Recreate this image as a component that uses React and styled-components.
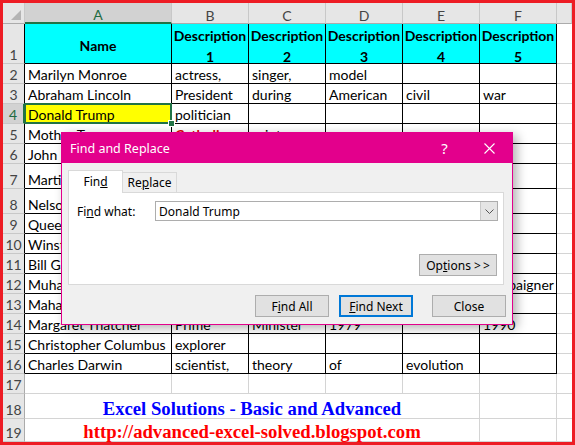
import React from 'react'
import styled, { createGlobalStyle } from 'styled-components'

const GlobalStyle = createGlobalStyle`
  body {
    margin: 0;
    background: #fff;
  }
`

const COLS = ['A', 'B', 'C', 'D', 'E', 'F']

// rows 2..16, [value, color] where a cell needs its own colour
const DATA = [
  ['Marilyn Monroe', 'actress,', 'singer,', 'model', '', ''],
  ['Abraham Lincoln', 'President', 'during', 'American', 'civil', 'war'],
  ['Donald Trump', 'politician', '', '', '', ''],
  ['Mother Teresa', ['Catholic', '#e00000'], 'saint', '', '', ''],
  ['John Lennon', 'singer,', 'songwriter', '', '', ''],
  ['Martin Luther King', 'activist', '', '', '', ''],
  ['Nelson Mandela', 'President', 'of', 'South', 'Africa', ''],
  ['Queen Elizabeth', 'monarch', '', '', '', ''],
  ['Winston Churchill', 'Prime', 'Minister', '', '', ''],
  ['Bill Gates', 'business', 'magnate', '', '', ''],
  ['Muhammad Ali', 'boxer,', 'activist,', '', '', 'campaigner'],
  ['Mahatma Gandhi', 'leader', '', '', '', ''],
  ['Margaret Thatcher', 'Prime', 'Minister', '1979', '', '1990'],
  ['Christopher Columbus', 'explorer', '', '', '', ''],
  ['Charles Darwin', 'scientist,', 'theory', 'of', 'evolution', '']
]

const Frame = styled.div`
  position: relative;
  width: 575px;
  height: 445px;
  box-sizing: border-box;
  border: 3px solid #ed1c24;
  overflow: hidden;
  font-family: Lato, 'Liberation Sans', sans-serif;
`

const Sheet = styled.div`
  display: grid;
  grid-template-columns: 22px 147px repeat(5, 77px) 1fr;
  grid-template-rows: 21px 40px repeat(5, 20px) 25px 25px repeat(9, 20px) 25px 23px;
  height: 100%;
`

const Corner = styled.div`
  display: flex;
  align-items: flex-end;
  justify-content: flex-end;
  padding: 0 3px 3px 0;
  background: #e6e6e6;
  border-right: 1px solid #c8c8c8;
  border-bottom: 1px solid #ababab;
`

const ColHead = styled.div`
  display: flex;
  align-items: center;
  justify-content: center;
  padding-top: 4px;
  background: ${p => (p.$active ? '#d2d2d2' : '#e6e6e6')};
  color: ${p => (p.$active ? '#1e6b41' : '#444')};
  border-right: 1px solid #c8c8c8;
  border-bottom: ${p => (p.$active ? '2px solid #217346' : '1px solid #ababab')};
  font-size: 14px;
`

const RowHead = styled.div`
  display: flex;
  align-items: flex-end;
  justify-content: center;
  background: ${p => (p.$active ? '#d2d2d2' : '#e6e6e6')};
  color: ${p => (p.$active ? '#1e6b41' : '#444')};
  border-bottom: 1px solid #c8c8c8;
  border-right: ${p => (p.$active ? '2px solid #217346' : p.$ruled ? '1px solid #000' : '1px solid #ababab')};
  font-size: 14px;
  line-height: 16px;
`

const Cell = styled.div`
  display: flex;
  align-items: ${p => (p.$head ? 'center' : 'flex-end')};
  justify-content: ${p => (p.$head ? 'center' : 'flex-start')};
  min-width: 0;
  padding: ${p => (p.$head ? '4px 3px 0' : '0 3px')};
  border-right: ${p => (p.$open ? 'none' : `1px solid ${p.$ruled ? '#000' : '#d4d4d4'}`)};
  border-bottom: 1px solid ${p => (p.$ruled ? '#000' : '#d4d4d4')};
  background: ${p => p.$fill || '#fff'};
  color: ${p => p.$color || '#000'};
  font-size: 14px;
  font-weight: ${p => (p.$head || p.$color ? 700 : 400)};
  line-height: ${p => (p.$head ? '21px' : '16px')};
  text-align: center;
  white-space: nowrap;

  ${p =>
    p.$selected &&
    `
    position: relative;
    z-index: 2;
    &::before {
      content: '';
      position: absolute;
      inset: -1px;
      border: 2px solid #217346;
    }
    &::after {
      content: '';
      position: absolute;
      right: -4px;
      bottom: -4px;
      width: 5px;
      height: 5px;
      background: #217346;
      border: 1px solid #fff;
    }
  `}
`

const Banner = styled.div`
  grid-column: span 5;
  display: flex;
  align-items: flex-end;
  justify-content: center;
  border-right: 1px solid #d4d4d4;
  border-bottom: 1px solid #d4d4d4;
  color: ${p => p.$color};
  font-family: 'Liberation Serif', 'Times New Roman', serif;
  font-size: 18.7px;
  font-weight: 700;
  line-height: 19px;
`

/* dialog */

const Dialog = styled.section`
  position: absolute;
  left: 58px;
  top: 129px;
  width: 452px;
  height: 193px;
  box-sizing: border-box;
  display: flex;
  flex-direction: column;
  border: 1px solid #e3008c;
  background: #f0f0f0;
  box-shadow: 4px 3px 10px rgba(0, 0, 0, 0.3);
  font-family: 'Noto Sans', 'Open Sans', sans-serif;
  font-size: 12px;
  color: #000;
`

const TitleBar = styled.header`
  display: flex;
  align-items: center;
  flex: none;
  height: 30px;
  padding-left: 8px;
  background: #e3008c;
  color: #fff;
`

const Title = styled.span`
  flex: 1;
  font-size: 12.5px;
`

const TitleButton = styled.span`
  display: flex;
  align-items: center;
  justify-content: center;
  width: 45px;
  height: 30px;
  font-size: 15px;
`

const Body = styled.div`
  display: flex;
  flex-direction: column;
  flex: 1;
  padding: 7px 6px 0;
`

const Tabs = styled.div`
  display: flex;
  align-items: flex-end;
  height: 23px;
  margin-bottom: -1px;
  position: relative;
  z-index: 1;
`

const Tab = styled.div`
  box-sizing: border-box;
  display: flex;
  align-items: center;
  justify-content: center;
  width: ${p => (p.$active ? 55 : 54)}px;
  height: ${p => (p.$active ? 23 : 20)}px;
  margin-bottom: ${p => (p.$active ? 0 : 1)}px;
  padding-bottom: ${p => (p.$active ? 1 : 0)}px;
  background: ${p => (p.$active ? '#fff' : '#f0f0f0')};
  border: 1px solid #d9d9d9;
  border-bottom: none;
  border-left: ${p => (p.$active ? '1px solid #d9d9d9' : 'none')};
`

const Panel = styled.div`
  box-sizing: border-box;
  display: flex;
  flex-direction: column;
  height: 93px;
  margin-right: 2px;
  padding: 8px 5px 8px 8px;
  background: #fff;
  border: 1px solid #d9d9d9;
`

const FieldRow = styled.div`
  display: flex;
  align-items: center;
  height: 20px;
`

const Label = styled.label`
  width: 78px;
  flex: none;
`

const Combo = styled.div`
  box-sizing: border-box;
  display: flex;
  align-items: center;
  flex: 1;
  height: 20px;
  border: 1px solid #adadad;
`

const ComboValue = styled.span`
  flex: 1;
  padding-left: 3px;
`

const ComboArrow = styled.span`
  box-sizing: border-box;
  display: flex;
  align-items: center;
  justify-content: center;
  width: 17px;
  height: 18px;
  background: #e5e5e5;
  border-left: 1px solid #c9c9c9;
`

const OptionsRow = styled.div`
  display: flex;
  justify-content: flex-end;
  margin-top: auto;
  padding-right: 1px;
`

const Actions = styled.div`
  display: flex;
  justify-content: flex-end;
  margin-top: 10px;
`

const Button = styled.button`
  box-sizing: border-box;
  width: ${p => p.$w || 74}px;
  height: 22px;
  margin: 0 0 0 ${p => p.$gap || 0}px;
  padding: 0;
  background: #e1e1e1;
  border: ${p => (p.$primary ? '2px solid #0078d7' : '1px solid #adadad')};
  font: inherit;
  color: #000;
`

const renderValue = v => (Array.isArray(v) ? v[0] : v)
const valueColor = v => (Array.isArray(v) ? v[1] : undefined)

export default function App() {
  return (
    <Frame>
      <GlobalStyle />
      <Sheet>
        <Corner>
          <svg width="10" height="10" viewBox="0 0 10 10">
            <path d="M10 0 L10 10 L0 10 Z" fill="#b4b4b4" />
          </svg>
        </Corner>
        {COLS.map(c => (
          <ColHead key={c} $active={c === 'A'}>
            {c}
          </ColHead>
        ))}
        <ColHead />

        <RowHead $ruled>1</RowHead>
        <Cell $head $ruled $fill="#00ffff">
          Name
        </Cell>
        {[1, 2, 3, 4, 5].map(n => (
          <Cell key={n} $head $ruled $fill="#00ffff">
            Description
            <br />
            {n}
          </Cell>
        ))}
        <Cell $open />

        {DATA.map((row, i) => (
          <React.Fragment key={i}>
            <RowHead $ruled $active={i === 2}>
              {i + 2}
            </RowHead>
            {row.map((v, j) => (
              <Cell
                key={j}
                $ruled
                $color={valueColor(v)}
                $fill={i === 2 && j === 0 ? '#ffff00' : undefined}
                $selected={i === 2 && j === 0}
              >
                {renderValue(v)}
              </Cell>
            ))}
            <Cell $open />
          </React.Fragment>
        ))}

        <RowHead>17</RowHead>
        {COLS.map(c => (
          <Cell key={c} />
        ))}
        <Cell $open />

        <RowHead>18</RowHead>
        <Banner $color="#0000ff">Excel Solutions - Basic and Advanced</Banner>
        <Cell />
        <Cell $open />

        <RowHead>19</RowHead>
        <Banner $color="#ff0000">http://advanced-excel-solved.blogspot.com</Banner>
        <Cell />
        <Cell $open />
      </Sheet>

      <Dialog>
        <TitleBar>
          <Title>Find and Replace</Title>
          <TitleButton>?</TitleButton>
          <TitleButton>
            <svg width="11" height="11" viewBox="0 0 11 11">
              <path d="M0.5 0.5 L10.5 10.5 M10.5 0.5 L0.5 10.5" stroke="#fff" strokeWidth="1.1" />
            </svg>
          </TitleButton>
        </TitleBar>
        <Body>
          <Tabs>
            <Tab $active>
              Fin<u>d</u>
            </Tab>
            <Tab>
              Re<u>p</u>lace
            </Tab>
          </Tabs>
          <Panel>
            <FieldRow>
              <Label>
                Fi<u>n</u>d what:
              </Label>
              <Combo>
                <ComboValue>Donald Trump</ComboValue>
                <ComboArrow>
                  <svg width="9" height="5" viewBox="0 0 9 5">
                    <path d="M0.5 0.5 L4.5 4.5 L8.5 0.5" fill="none" stroke="#555" strokeWidth="1" />
                  </svg>
                </ComboArrow>
              </Combo>
            </FieldRow>
            <OptionsRow>
              <Button $w={78}>
                Op<u>t</u>ions &gt;{'\u2009'}&gt;
              </Button>
            </OptionsRow>
          </Panel>
          <Actions>
            <Button>
              F<u>i</u>nd All
            </Button>
            <Button $primary $gap={10}>
              <u>F</u>ind Next
            </Button>
            <Button $gap={19}>Close</Button>
          </Actions>
        </Body>
      </Dialog>
    </Frame>
  )
}
